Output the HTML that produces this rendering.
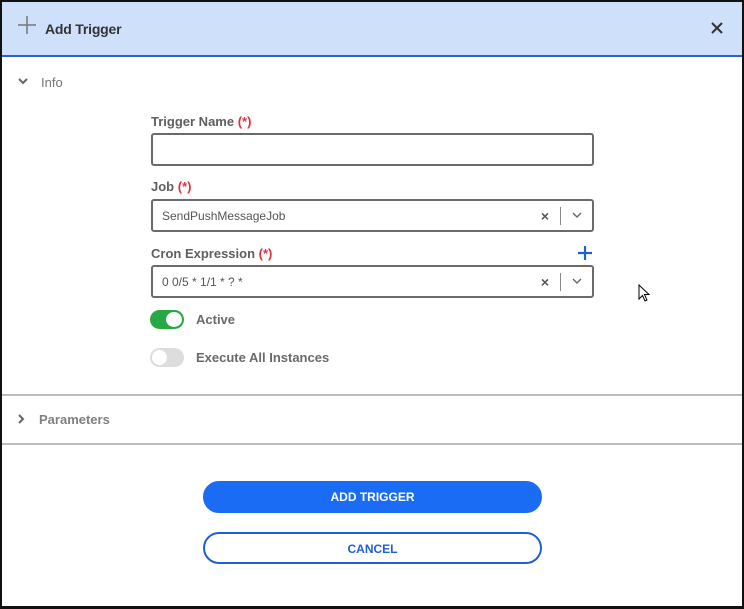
<!DOCTYPE html>
<html><head><meta charset="utf-8"><style>
*{margin:0;padding:0;box-sizing:border-box}
body{width:744px;height:609px;background:#fff;font-family:"Liberation Sans",sans-serif;position:relative;overflow:hidden}
.a{position:absolute}
.frame{left:0;top:0;width:744px;height:609px;border:2px solid #111;border-bottom-width:3px}
.hdr{left:2px;top:2px;width:740px;height:55px;background:#cfe0fb;border-bottom:2px solid #2a62d0}
.lbl{font-size:13px;font-weight:bold;color:#5f5f5f}
.req{color:#d9333f}
.box{left:151px;width:443px;height:33px;border:2px solid #6b6b6b;border-radius:3px;background:#fff}
.val{position:absolute;left:9px;top:8px;font-size:12px;color:#555}
.x{position:absolute;right:43px;top:7px;font-size:14px;font-weight:bold;color:#555}
.sep{position:absolute;right:31px;top:6px;width:1px;height:18px;background:#888}
.dd{position:absolute;right:10px;top:9px}
.div{left:2px;width:740px;height:2px;background:#bdbdbd}
.btn{left:203px;width:339px;height:32px;border-radius:16px;text-align:center;font-size:12px;font-weight:bold;line-height:30px}
</style></head><body>
<div class="a hdr"></div>
<svg class="a" style="left:17px;top:15px" width="20" height="20"><path d="M10 1V19M1 10H19" stroke="#777" stroke-width="1.5"/></svg>
<div class="a" style="left:45px;top:21px;font-size:14px;color:#333;font-weight:bold;letter-spacing:-0.2px">Add Trigger</div>
<svg class="a" style="left:710px;top:21px" width="14" height="14"><path d="M2 2L12 12M12 2L2 12" stroke="#333" stroke-width="2"/></svg>
<svg class="a" style="left:18px;top:78px" width="10" height="8"><path d="M1 1L5 5L9 1" stroke="#666" stroke-width="2" fill="none"/></svg>
<div class="a" style="left:41px;top:75px;font-size:13px;color:#777">Info</div>
<div class="a lbl" style="left:151px;top:114px">Trigger Name <span class="req">(*)</span></div>
<div class="a box" style="top:133px"></div>
<div class="a lbl" style="left:151px;top:179px">Job <span class="req">(*)</span></div>
<div class="a box" style="top:199px"><span class="val">SendPushMessageJob</span><span class="x">×</span><span class="sep"></span><svg class="dd" width="10" height="10"><path d="M1 3L5 7L9 3" stroke="#666" stroke-width="1.4" fill="none"/></svg></div>
<div class="a lbl" style="left:151px;top:246px">Cron Expression <span class="req">(*)</span></div>
<svg class="a" style="left:578px;top:246px" width="14" height="14"><path d="M7 0V14M0 7H14" stroke="#1f5fd6" stroke-width="2.2"/></svg>
<div class="a box" style="top:265px"><span class="val">0 0/5 * 1/1 * ? *</span><span class="x">×</span><span class="sep"></span><svg class="dd" width="10" height="10"><path d="M1 3L5 7L9 3" stroke="#666" stroke-width="1.4" fill="none"/></svg></div>
<div class="a" style="left:150px;top:310px;width:34px;height:19px;border-radius:10px;background:#28a745"></div>
<div class="a" style="left:166px;top:312px;width:16px;height:15px;border-radius:50%;background:#fff"></div>
<div class="a lbl" style="left:196px;top:312px;color:#6a6a6a">Active</div>
<div class="a" style="left:150px;top:348px;width:34px;height:19px;border-radius:10px;background:#ddd"></div>
<div class="a" style="left:151px;top:349px;width:17px;height:17px;border-radius:50%;background:#fff;border:1px solid #ddd"></div>
<div class="a lbl" style="left:196px;top:350px;color:#6a6a6a">Execute All Instances</div>
<div class="a div" style="top:394px"></div>
<svg class="a" style="left:18px;top:414px" width="8" height="10"><path d="M1 1L5 5L1 9" stroke="#666" stroke-width="2" fill="none"/></svg>
<div class="a" style="left:39px;top:412px;font-size:13px;font-weight:bold;color:#808080">Parameters</div>
<div class="a div" style="top:443px"></div>
<div class="a btn" style="top:481px;background:#1a6cf5;color:#fff;border:1px solid #1a6cf5">ADD TRIGGER</div>
<div class="a btn" style="top:532px;background:#fff;color:#1f5fd6;border:2px solid #1f5fd6">CANCEL</div>
<svg class="a" style="left:638px;top:284px" width="12" height="18"><path d="M1 1V15L4.5 11.5L7 17L9 16L6.5 10.5H11Z" fill="#fff" stroke="#000" stroke-width="1"/></svg>
<div class="a frame"></div>
</body></html>
